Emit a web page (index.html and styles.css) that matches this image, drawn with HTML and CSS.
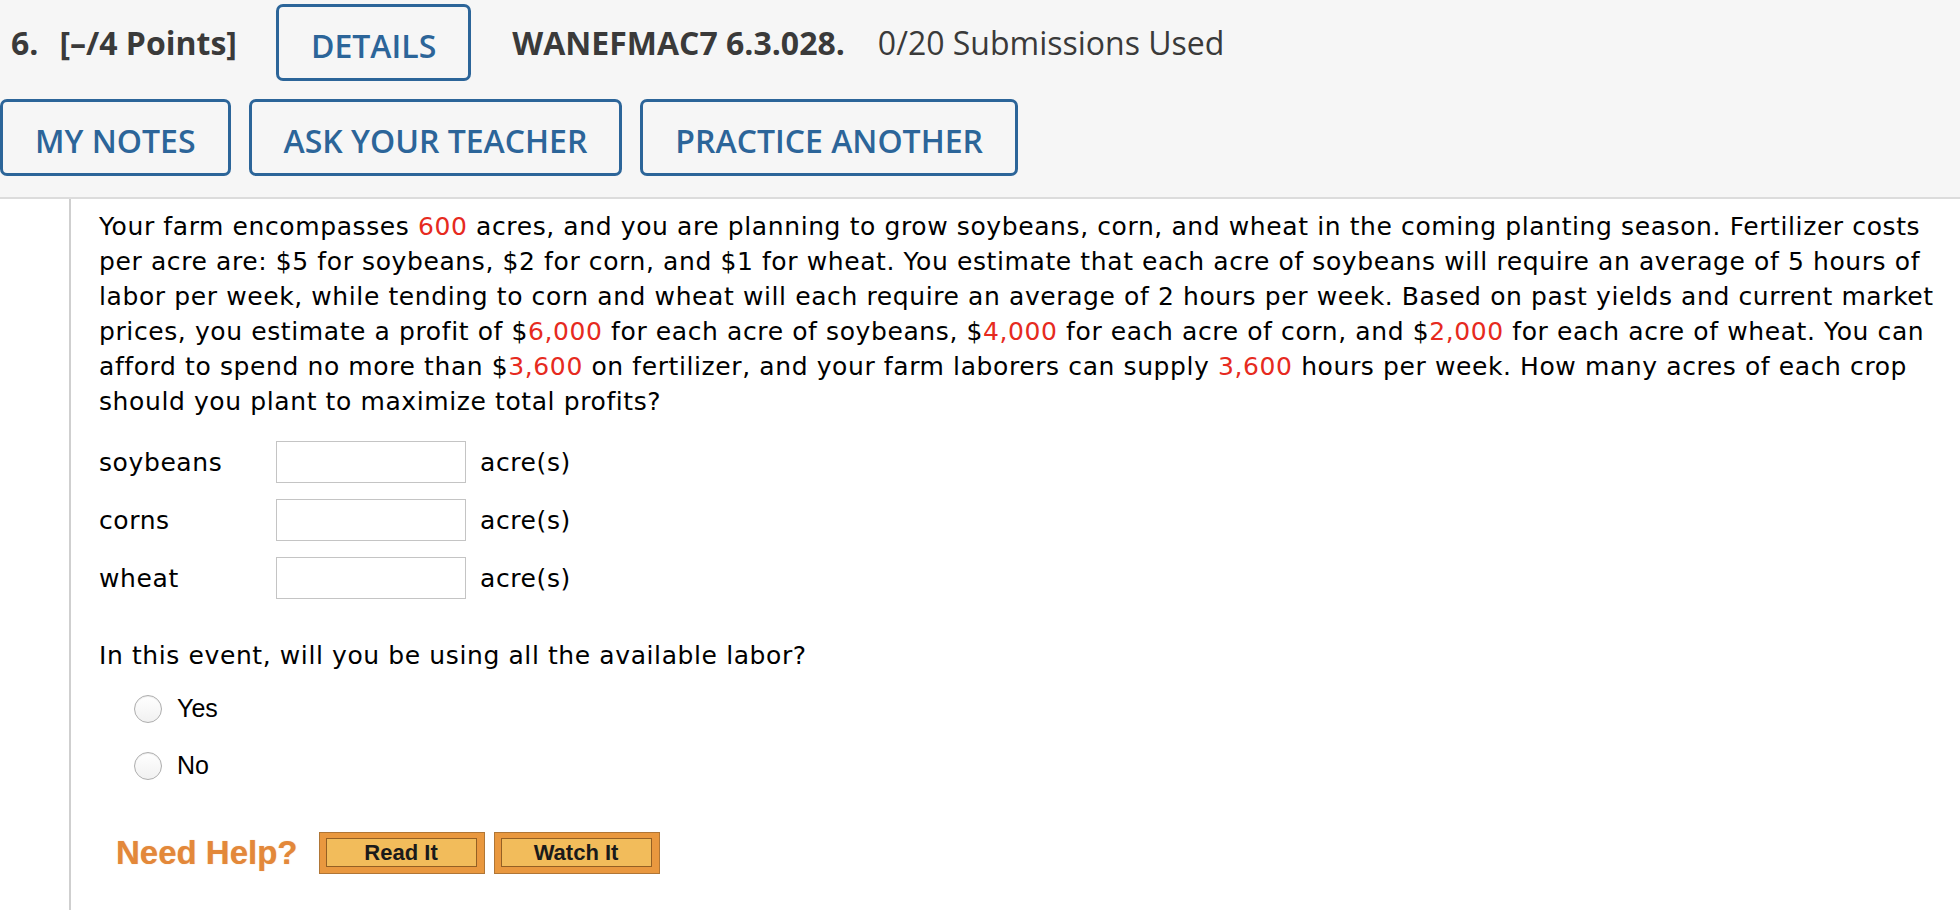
FILE: index.html
```html
<!DOCTYPE html>
<html>
  <head>
    <title>WANEFMAC7 6.3.028</title>
    <link rel="stylesheet" href="styles.css">
  </head>
  <body>
    <header class="q-head">
      <div class="q-title">
        <span class="q-num">6.</span>
        <span class="q-points">[–/4 Points]</span>
        <button class="btn">DETAILS</button>
        <span class="q-code">WANEFMAC7 6.3.028.</span>
        <span class="q-subs">0/20 Submissions Used</span>
      </div>
      <div class="q-actions">
        <button class="btn">MY NOTES</button>
        <button class="btn">ASK YOUR TEACHER</button>
        <button class="btn">PRACTICE ANOTHER</button>
      </div>
    </header>

    <main class="q-body">
      <p class="q-text">
        Your farm encompasses <span class="val">600</span> acres, and you are planning to grow soybeans, corn, and wheat in the coming planting season. Fertilizer costs per acre are: $5 for soybeans, $2 for corn, and $1 for wheat. You estimate that each acre of soybeans will require an average of 5 hours of labor per week, while tending to corn and wheat will each require an average of 2 hours per week. Based on past yields and current market prices, you estimate a profit of $<span class="val">6,000</span> for each acre of soybeans, $<span class="val">4,000</span> for each acre of corn, and $<span class="val">2,000</span> for each acre of wheat. You can afford to spend no more than $<span class="val">3,600</span> on fertilizer, and your farm laborers can supply <span class="val">3,600</span> hours per week. How many acres of each crop should you plant to maximize total profits?
      </p>

      <div class="answers">
        <label for="soy">soybeans</label>
        <input id="soy" type="text" />
        <span>acre(s)</span>

        <label for="corn">corns</label>
        <input id="corn" type="text" />
        <span>acre(s)</span>

        <label for="wheat">wheat</label>
        <input id="wheat" type="text" />
        <span>acre(s)</span>
      </div>

      <p class="q-text q-second">In this event, will you be using all the available labor?</p>

      <div class="choices">
        <label class="choice"><input type="radio" name="labor" /> Yes</label>
        <label class="choice"><input type="radio" name="labor" /> No</label>
      </div>

      <div class="help">
        <span class="help-title">Need Help?</span>
        <button class="help-btn"><span>Read It</span></button>
        <button class="help-btn"><span>Watch It</span></button>
      </div>
    </main>
  </body>
</html>
```

FILE: styles.css
```css
:root {
  --head-bg: #f6f6f6;
  --head-color: #3a3a3a;
  --btn-blue: #2c6599;
  --val-red: #e62a20;
}

* {
  margin: 0;
  padding: 0;
  box-sizing: border-box;
}
body {
  display: flex;
  flex-direction: column;
  min-height: 100vh;
  background: #fff;
  font-family: "DejaVu Sans", Verdana, sans-serif;
  color: #000;
}

/* question header */
.q-head {
  background: var(--head-bg);
  border-bottom: 2px solid #dcdcdc;
  padding: 4px 0 21px;
  font-family: "Open Sans", sans-serif;
  color: var(--head-color);

  .q-title {
    display: flex;
    align-items: center;
    padding-left: 11px;
    font-size: 32px;
  }
  .q-num,
  .q-points,
  .q-code {
    font-weight: 700;
  }
  .q-points {
    margin: 0 39px 0 21px;
  }
  .q-code {
    margin: 0 33px 0 41px;
  }

  .q-actions {
    display: flex;
    gap: 18px;
    margin-top: 18px;
  }
}

.btn {
  font-family: "Open Sans", sans-serif;
  font-weight: 600;
  font-size: 32px;
  line-height: 44px;
  color: var(--btn-blue);
  background: transparent;
  border: 3px solid var(--btn-blue);
  border-radius: 7px;
  padding: 17px 32px 10px;
}

/* question body */
.q-body {
  flex: 1;
  margin-left: 69px;
  border-left: 2px solid #cfcfcf;
  padding: 10px 10px 0 28px;
  font-size: 25px;
  letter-spacing: 0.6px;
}

.q-text {
  line-height: 35px;

  .val {
    color: var(--val-red);
  }
}

.answers {
  display: grid;
  grid-template-columns: 177px 190px auto;
  grid-auto-rows: 42px;
  row-gap: 16px;
  align-items: center;
  margin-top: 22px;

  input {
    width: 190px;
    height: 42px;
    border: 1px solid #c4c4c4;
  }
  span {
    margin-left: 14px;
  }
}

.q-second {
  margin-top: 39px;
}

.choices {
  display: flex;
  flex-direction: column;
  gap: 28px;
  margin-top: 21px;
  padding-left: 35px;

  .choice {
    display: flex;
    align-items: center;
    gap: 15px;
    font-family: "Liberation Sans", Arial, sans-serif;
    font-size: 25px;
    letter-spacing: 0;
  }

  input {
    appearance: none;
    width: 28px;
    height: 28px;
    border: 1px solid #aeaeae;
    border-radius: 50%;
    background: linear-gradient(#ffffff, #f1f1f1);
    box-shadow: inset 0 1px 1px rgba(0, 0, 0, 0.08);
  }
}

.help {
  display: flex;
  align-items: center;
  gap: 9px;
  margin-top: 52px;
  padding-left: 17px;
  letter-spacing: 0;

  .help-title {
    font-family: "Liberation Sans", Arial, sans-serif;
    font-weight: 700;
    font-size: 33px;
    color: #e3883a;
    text-shadow: 0 0 1px rgba(227, 136, 58, 0.6);
    margin-right: 12px;
  }
}

.help-btn {
  width: 166px;
  height: 42px;
  padding: 5px 7px 6px 6px;
  background: #e9983f;
  border: 1px solid #b07636;

  span {
    display: block;
    height: 100%;
    background: #f2bc5b;
    border: 1px solid #946024;
    font-family: "Liberation Sans", Arial, sans-serif;
    font-weight: 700;
    font-size: 22px;
    line-height: 27px;
    color: #1a1a1a;
  }
}
```
